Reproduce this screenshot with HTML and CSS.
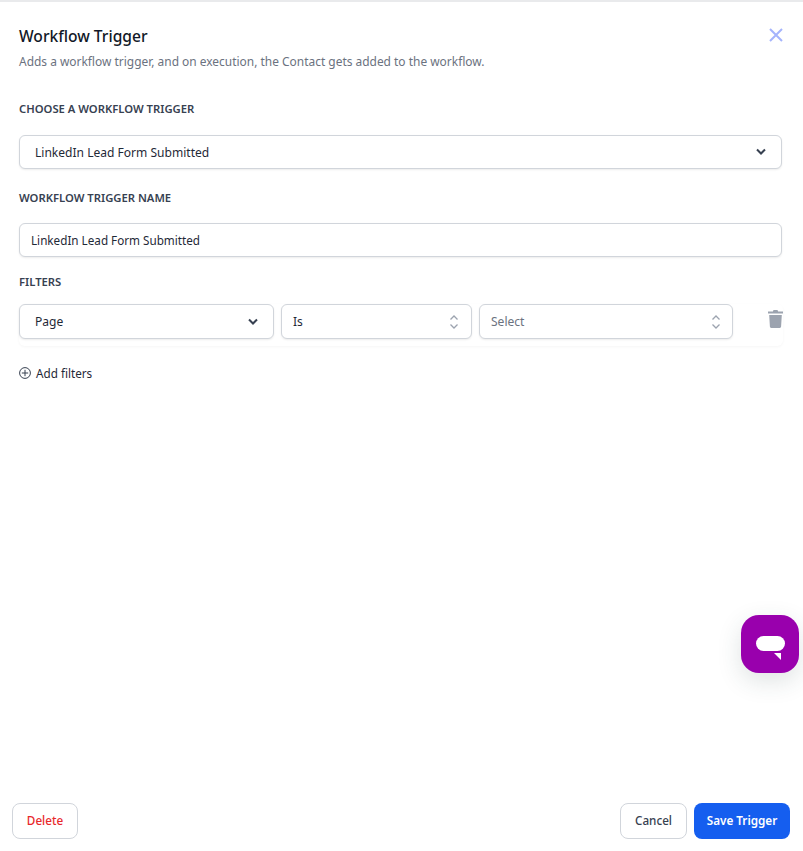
FILE: index.html
```html
<!DOCTYPE html>
<html lang="en">
<head>
  <meta charset="UTF-8">
  <meta name="viewport" content="width=device-width, initial-scale=1">
  <title>Workflow Trigger</title>
  <link rel="stylesheet" href="styles.css">
</head>
<body>

<div class="panel">
  <div class="content">
    <div class="header">
      <div>
        <h1 class="title">Workflow Trigger</h1>
        <p class="subtitle">Adds a workflow trigger, and on execution, the Contact gets added to the workflow.</p>
      </div>
      <button class="close" aria-label="Close">
        <svg width="14" height="14" viewBox="0 0 14 14" fill="none" stroke="#a5b4fc" stroke-width="2"><path d="M1 1l12 12M13 1L1 13"/></svg>
      </button>
    </div>

    <label class="label label-trigger">CHOOSE A WORKFLOW TRIGGER</label>
    <div class="field field-select">
      <span>LinkedIn Lead Form Submitted</span>
      <svg class="chevron" width="12" height="8" viewBox="0 0 12 8" fill="none" stroke="#374151" stroke-width="2"><path d="M2 1.5l4 4 4-4"/></svg>
    </div>

    <label class="label label-name">WORKFLOW TRIGGER NAME</label>
    <div class="field field-input">LinkedIn Lead Form Submitted</div>

    <label class="label label-filters">FILTERS</label>
    <div class="filter-row">
      <div class="field filter-page">
        <span>Page</span>
        <svg class="chevron" width="12" height="8" viewBox="0 0 12 8" fill="none" stroke="#374151" stroke-width="2"><path d="M2 1.5l4 4 4-4"/></svg>
      </div>
      <div class="field filter-op">
        <span>Is</span>
        <svg class="updown" width="10" height="16" viewBox="0 0 10 16" fill="none" stroke="#9ca3af" stroke-width="1.3"><path d="M1.5 5.5L5 2l3.5 3.5M1.5 10.5L5 14l3.5-3.5"/></svg>
      </div>
      <div class="field filter-value">
        <span class="placeholder">Select</span>
        <svg class="updown" width="10" height="16" viewBox="0 0 10 16" fill="none" stroke="#9ca3af" stroke-width="1.3"><path d="M1.5 5.5L5 2l3.5 3.5M1.5 10.5L5 14l3.5-3.5"/></svg>
      </div>
      <button class="trash" aria-label="Remove filter">
        <svg width="15" height="18" viewBox="0 0 15 18" fill="#9ca3af"><path d="M5.5 0h4l.6 1.5H15v2H0v-2h4.900z"/><path d="M1.200 5h12.600l-.7 11.600c0 .8-.6 1.400-1.400 1.400H3.300c-.8 0-1.400-.6-1.400-1.400z"/></svg>
      </button>
    </div>

    <button class="add-filter">
      <svg width="12" height="12" viewBox="0 0 12 12" fill="none" stroke="#374151" stroke-width="1"><circle cx="6" cy="6" r="5.400"/><path d="M6 2.800v6.400M2.800 6h6.400"/></svg>
      Add filters
    </button>
  </div>

  <div class="footer">
    <button class="btn btn-delete">Delete</button>
    <div class="footer-right">
      <button class="btn btn-cancel">Cancel</button>
      <button class="btn btn-save">Save Trigger</button>
    </div>
  </div>
</div>

<button class="chat" aria-label="Chat">
  <svg width="30" height="24" viewBox="0 0 30 24" fill="#fff"><rect x="0" y="0" width="29" height="15" rx="7.500"/><path d="M18 17h7v7z"/></svg>
</button>

</body>
</html>
```

FILE: styles.css
```css
* {
  box-sizing: border-box;
  margin: 0;
  padding: 0;
}

body {
  font-family: 'Noto Sans', 'Open Sans', sans-serif;
  background-color: #fff;
  color: #111827;
  height: 851px;
  overflow: hidden;
}

button {
  font-family: inherit;
  background: none;
  border: none;
  cursor: pointer;
}

.panel {
  height: 100%;
  border-top: 2px solid #e9eaec;
  display: flex;
  flex-direction: column;
  justify-content: space-between;
}

.content {
  padding: 24px 21px 0 19px;
}

.header {
  display: flex;
  justify-content: space-between;
  align-items: flex-start;
}

.title {
  font-size: 15.6px;
  font-weight: 500;
  line-height: 20px;
  color: #111827;
}

.subtitle {
  font-size: 11.95px;
  line-height: 16px;
  margin-top: 8px;
  color: #6b7280;
}

.close {
  display: flex;
  margin: 2px -1px 0 0;
}

.label {
  display: block;
  font-size: 11.25px;
  font-weight: 600;
  line-height: 14px;
  color: #374151;
}

.label-trigger {
  margin-top: 32px;
}

.label-name {
  margin-top: 22px;
}

.label-filters {
  margin-top: 18px;
}

.field {
  display: flex;
  justify-content: space-between;
  align-items: center;
  background-color: #fff;
  border: 1px solid #d1d5db;
  border-radius: 6px;
  box-shadow: 0 1px 2px rgba(0, 0, 0, 0.08);
  font-size: 12.05px;
  color: #1f2937;
}

.field-select {
  height: 34px;
  margin-top: 19px;
  padding: 0 14px 0 15px;
}

.field-input {
  height: 34px;
  margin-top: 18px;
  padding: 0 11px;
  font-size: 11.7px;
}

.filter-row {
  display: flex;
  margin-top: 15px;
  margin-right: -1px;
  padding-bottom: 7px;
  border-radius: 6px;
  box-shadow: 0 1px 3px rgba(0, 0, 0, 0.04);
}

.filter-row .field {
  height: 35px;
  margin-right: 7px;
}

.filter-page {
  width: 255px;
  padding: 0 14px 0 15px;
}

.filter-op {
  width: 191px;
  padding: 0 12px 0 11px;
}

.filter-value {
  width: 254px;
  padding: 0 11px;
}

.placeholder {
  color: #6b7280;
}

.trash {
  display: flex;
  margin: 6px 0 0 28px;
  height: 18px;
}

.add-filter {
  display: flex;
  align-items: center;
  gap: 5px;
  margin-top: 19px;
  font-size: 11.7px;
  line-height: 16px;
  color: #1f2937;
}

.footer {
  display: flex;
  justify-content: space-between;
  padding: 0 13px 12px 12px;
}

.footer-right {
  display: flex;
  gap: 7px;
}

.btn {
  height: 36px;
  padding-bottom: 2px;
  border-radius: 8px;
  font-size: 11.7px;
  font-weight: 500;
}

.btn-delete {
  width: 66px;
  background-color: #fff;
  border: 1px solid #d1d5db;
  color: #e8282b;
}

.btn-cancel {
  width: 67px;
  background-color: #fff;
  border: 1px solid #d1d5db;
  color: #374151;
}

.btn-save {
  width: 96px;
  background-color: #155eef;
  color: #fff;
  font-weight: 600;
}

/* floating chat launcher */
.chat {
  position: absolute;
  left: 741px;
  top: 615px;
  width: 58px;
  height: 58px;
  border-radius: 18px;
  background-color: #9900ad;
  box-shadow: 0 8px 24px rgba(40, 70, 70, 0.15);
  display: flex;
  align-items: center;
  justify-content: center;
  padding: 8px 0 0 1px;
}
```
